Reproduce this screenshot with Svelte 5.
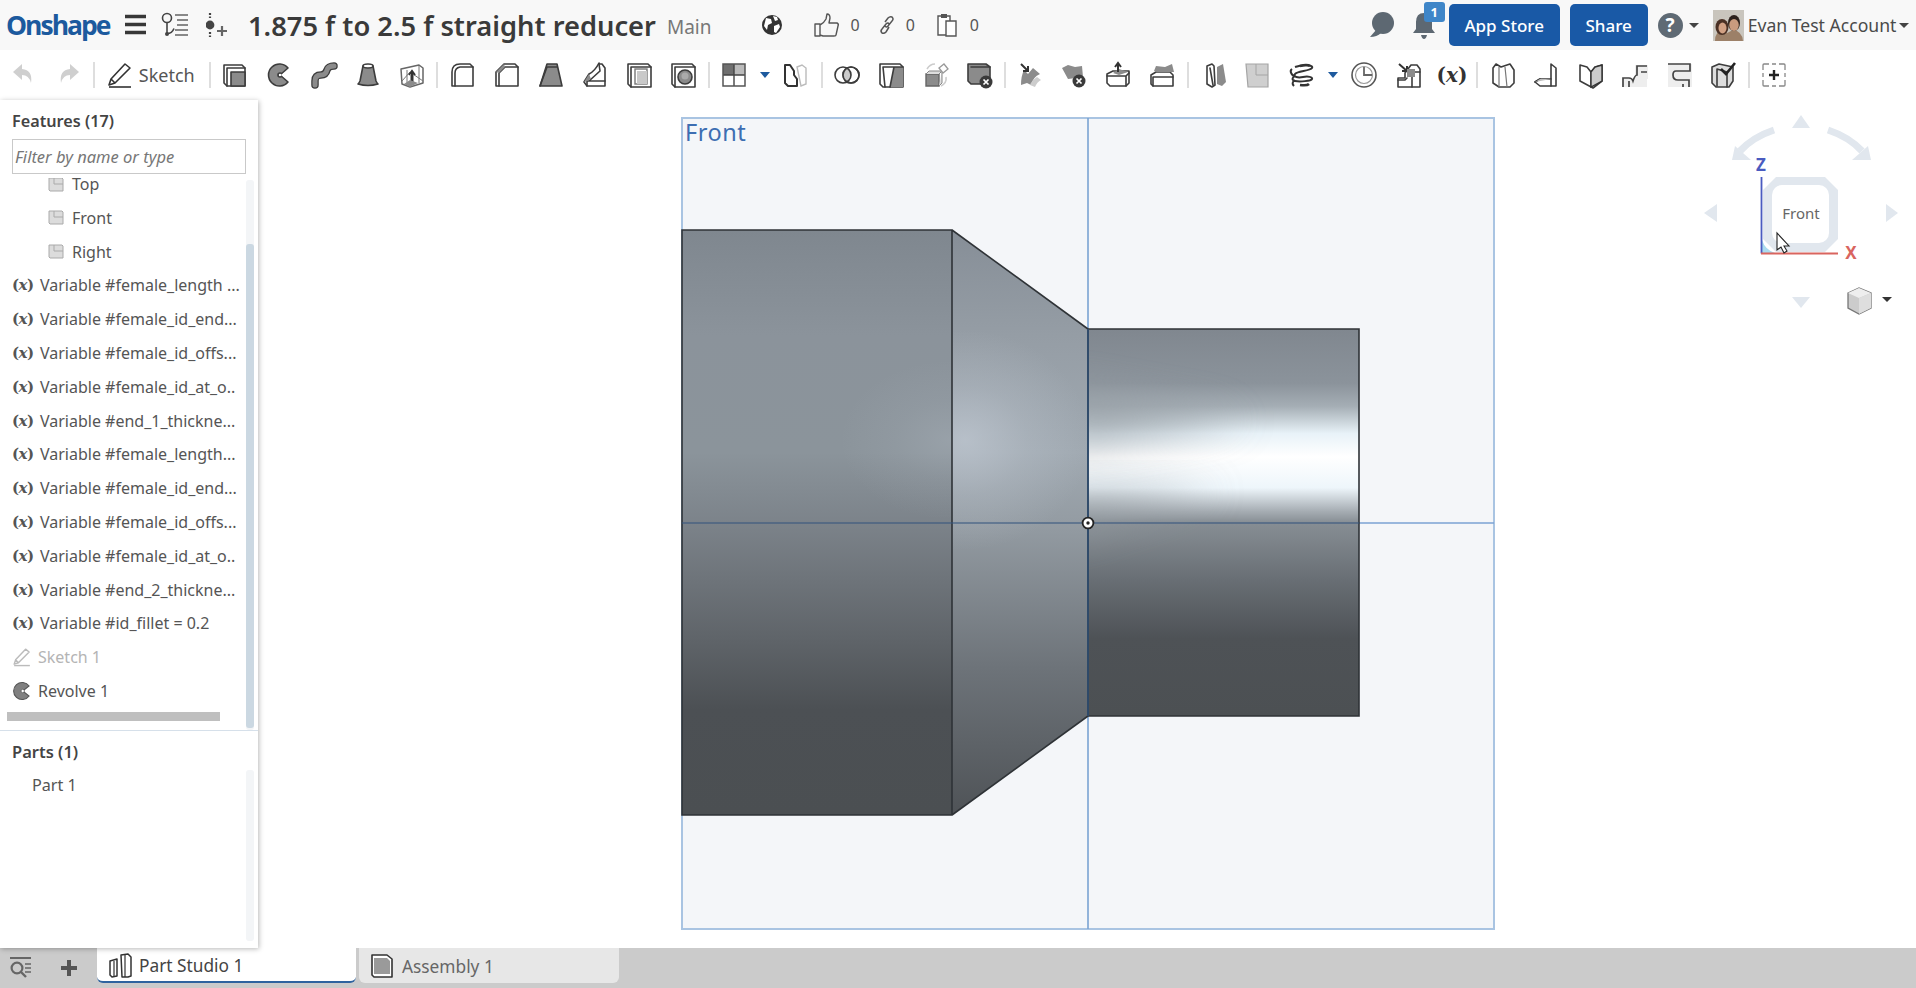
<script>
  // stroke helpers for the toolbar glyphs
  const d = 'stroke="#3c3c3c" stroke-width="1.6" stroke-linejoin="round" stroke-linecap="round"'
  const g = '#8b8b8b'
  const closeBadge = (x, y) => `<circle cx="${x}" cy="${y}" r="6.5" fill="#3a3a3a"/><path d="M${x - 2.5} ${y - 2.5}l5 5m0-5l-5 5" stroke="#fff" stroke-width="1.7"/>`

  const icons = {
    extrude: `<path d="M3 4h18l3 3v18H6l-3-3z" fill="#fff" ${d}/><path d="M6 7h15v0l3 0M6 7v18" fill="none" ${d}/><rect x="10" y="11" width="14" height="14" fill="${g}" ${d}/>`,
    revolve: `<path d="M23 7A11 11 0 1 0 23 21L15 14z" fill="${g}" ${d}/><circle cx="15" cy="14" r="2" fill="#fff" ${d}/><path d="M22 11l-5 3 5 3" fill="none" stroke="#fff" stroke-width="1.4"/>`,
    sweep: `<path d="M5 24v-4c0-5 3-6 6-6s5-1 6-5c.5-2 3-4 7-4" fill="none" stroke="#3c3c3c" stroke-width="7.5" stroke-linecap="round"/><path d="M5 24v-4c0-5 3-6 6-6s5-1 6-5c.5-2 3-4 7-4" fill="none" stroke="${g}" stroke-width="5" stroke-linecap="round"/>`,
    loft: `<path d="M9 5L6 20q-1 2-2 3 10 3 20 0-1-1-2-3L19 5z" fill="${g}" ${d}/><ellipse cx="14" cy="5" rx="5" ry="2" fill="#fff" ${d}/>`,
    thicken: `<path d="M3 8l18-4 4 3v15l-13 4-8-3z" fill="#fff" stroke="#666" stroke-width="1.5" stroke-linejoin="round"/><path d="M9 9v15M21 5v17M4 20l8-9 13 9" fill="none" stroke="#777" stroke-width="1"/><path d="M14 20V11m-3 3l3-4 3 4" fill="none" stroke="#333" stroke-width="2"/><rect x="12.5" y="14" width="3" height="8" fill="#333"/><path d="M6 23l6-4 8 3-8 4z" fill="${g}"/>`,
    fillet: `<path d="M3 25V11q0-8 8-8h10l3 3v19z" fill="#fff" ${d}/><path d="M6 25V12q0-5 5-6h13" fill="none" ${d}/>`,
    chamfer: `<path d="M3 25V11l8-8h11l3 3v19z" fill="#fff" ${d}/><path d="M6 25V12l6-6h13" fill="none" ${d}/><path d="M3 11l8-8 1 3-6 6z" fill="${g}"/>`,
    draft: `<path d="M10 3h10l5 22H3z" fill="${g}" ${d}/><path d="M3 25l7-19h10" fill="none" ${d}/>`,
    rib: `<path d="M18 3h3l3 4v18H6l-3-4 5-8q6-3 10-11z" fill="#fff" ${d}/><path d="M6 25v-5h18M18 3l1 7-11 10" fill="none" ${d}/><path d="M3 21l5-8 2 5-4 2z" fill="${g}"/>`,
    shell: `<path d="M3 3h20l3 3v20H6l-3-3z" fill="#fff" ${d}/><path d="M6 6h20M6 6v20" fill="none" ${d}/><rect x="10" y="8" width="12" height="15" fill="#fff" stroke="#777" stroke-width="1.4"/><rect x="12" y="10" width="10" height="13" fill="#c9c9c9"/>`,
    hole: `<path d="M3 3h20l3 3v20H6l-3-3z" fill="#fff" ${d}/><path d="M6 6h20M6 6v20" fill="none" ${d}/><circle cx="16" cy="16" r="7" fill="${g}" ${d}/><circle cx="16" cy="15" r="3.5" fill="#aaa"/>`,
    pattern: `<path d="M3 3h22v22H3z" fill="#fff"/><rect x="3" y="3" width="11" height="11" fill="#6f6f6f"/><path d="M14 14h11V3H14z" fill="#bbb"/><path d="M3 14h22M14 3v22" stroke="#444" stroke-width="1.4"/><path d="M3 3h22v22H3z" fill="none" stroke="#555" stroke-width="1.5"/>`,
    mirror: `<path d="M15 6l5-2 4 3v16l-5 2z" fill="#fff" stroke="#bbb" stroke-width="1.4"/><path d="M3 4h5l4 6v4l3 4v7H6l-3-3z" fill="#fff" stroke="#333" stroke-width="2" stroke-linejoin="round"/>`,
    boolean: `<circle cx="18" cy="14" r="8" fill="#fff" ${d}/><path d="M14 7a8 8 0 0 1 0 14 8 8 0 0 1 0-14z" fill="#ccc"/><circle cx="10" cy="14" r="8" fill="none" ${d}/><circle cx="18" cy="14" r="8" fill="none" ${d}/>`,
    split: `<path d="M3 3h20l3 3v20H6l-3-3z" fill="#fff" ${d}/><path d="M17 6h9v20H13z" fill="${g}"/><path d="M6 6h20M6 6l2 20M17 6l-4 20" fill="none" ${d}/>`,
    transform: `<path d="M5 13h13v12H5z" fill="${g}" stroke="#666" stroke-width="1.4"/><path d="M5 13l3-3h13l-3 3M21 10v12l-3 3" fill="#ddd" stroke="#888" stroke-width="1"/><path d="M18 7l5-4 4 5-5 4z" fill="#fff" stroke="#999" stroke-width="1.3"/><path d="M6 8q3-5 8-5M25 16q1 6-5 9" fill="none" stroke="#ccc" stroke-width="1.6"/>`,
    delpart: `<path d="M3 3h18l4 3v17H6l-3-3z" fill="${g}" ${d}/><path d="M6 6h19" ${d}/>${closeBadge(21, 21)}`,
    moveface: `<path d="M5 24q0-9 3-15l4 4 5-6 7 6q-7 3-9 11l-4-2z" fill="${g}"/><path d="M14 24q2-5 7-8l4 3q-4 2-6 7z" fill="#ccc"/><path d="M5 3l7 7m0-5v5H7" fill="none" stroke="#333" stroke-width="2"/>`,
    delface: `<path d="M2 7l6-3 7 2 7-1 1 11-7 1-8 1z" fill="${g}"/>${closeBadge(19, 20)}`,
    modfillet: `<path d="M3 13l6-3h16v12l-3 3H6l-3-3z" fill="#fff" ${d}/><path d="M3 15h19v10M22 15l3-3" fill="none" ${d}/><path d="M9 12l6-4 9 3-9 3z" fill="${g}"/><path d="M14 11V3m-3 3l3-4 3 4" fill="none" stroke="#333" stroke-width="2"/>`,
    replace: `<path d="M3 14l5-3h14l3 3v11H5l-2-2z" fill="#fff" ${d}/><path d="M5 16h20M5 16v9" fill="none" ${d}/><path d="M6 10l2-5 9 1 7-3 2 8H9z" fill="${g}"/>`,
    plane: `<path d="M8 5l5-2 2 2 1 19-3 2-5-3z" fill="#fff" ${d}/><path d="M11 7l3 17" ${d}/><path d="M18 6l6-3 3 18-4 4-5-2z" fill="${g}"/>`,
    plane2: `<path d="M3 3h22v23H5z" fill="#cfcfcf" stroke="#a5a5a5" stroke-width="1.2"/><path d="M13 3v11h12" fill="none" stroke="#a5a5a5" stroke-width="1"/>`,
    helix: `<path d="M8 6c8-3 19-2 17 1s-15 3-17 6 3 4 8 3 10 0 9 2-12 3-17 2-1-5 0-5c-3 0 -6-5-3-7 M8 19c-3 2-3 4-1 6" fill="none" stroke="#333" stroke-width="2"/><path d="M13 5q7-2 10 0M13 24q7 1 9-1" stroke="#333" stroke-width="2.6" fill="none"/>`,
    clock: `<circle cx="14" cy="14" r="12" fill="#fff" stroke="#555" stroke-width="1.6"/><circle cx="14" cy="14" r="8.5" fill="none" stroke="#999" stroke-width="1.2"/><path d="M14 6v8h8" fill="none" stroke="#666" stroke-width="1.8"/>`,
    derive: `<path d="M4 17h7v-5l6-8h6l3 4v18H4z" fill="#fff" ${d}/><path d="M4 19h7l2-2M26 11h-8v15" fill="none" ${d}/><path d="M5 3l8 7m0-5v5H8" fill="none" stroke="#333" stroke-width="2"/><path d="M13 8h8v8h-8z" fill="${g}"/>`,
    sheet: `<path d="M7 3l5 3 9-3 4 6v13l-4 4H10l-6-4V7z" fill="#fff" ${d}/><path d="M10 6v20M16 6l2 20" fill="none" stroke="#777" stroke-width="1.2"/>`,
    flange: `<path d="M18 3l5 4v18H7l-5-4 5-3h11z" fill="#fff" ${d}/><path d="M18 18v7M7 18l-5 3" fill="none" ${d}/><path d="M7 18h11L2 21z" fill="#bbb"/>`,
    hem: `<path d="M3 4l7 2 4 5 4-5 7-2v16l-9 7-13-7z" fill="#fff" ${d}/><path d="M14 11v14" ${d}/><path d="M14 11l4-5 7-2v16l-11 6z" fill="#ccc" stroke="#333" stroke-width="1.4"/>`,
    jog: `<rect x="2" y="18" width="24" height="8" fill="#eee"/><rect x="14" y="4" width="13" height="14" fill="#eee"/><path d="M2 26V17h6q3 0 4 3 2-6 4-6V5h10M8 26v-6M26 11H20" fill="none" stroke="#444" stroke-width="1.7"/>`,
    bend: `<rect x="3" y="3" width="24" height="23" fill="#eee"/><path d="M3 3h22v7H11q-3 0-3 4 0 5 5 5h11v7M18 26v-3" fill="none" stroke="#444" stroke-width="1.7"/>`,
    finish: `<path d="M3 6l7-3 14 3v14l-4 6H7l-4-4z" fill="#ddd" ${d}/><path d="M8 25V8l10 3v15" fill="none" ${d}/><path d="M12 8l5 5 9-11" fill="none" stroke="#222" stroke-width="2.6"/>`,
    add: `<path d="M3 9V4q0-1 1-1h5M19 3h5q1 0 1 1v5M25 19v5q0 1-1 1h-5M9 25H4q-1 0-1-1v-5M3 12v4M25 12v4M12 3h4M12 25h4" fill="none" stroke="#888" stroke-width="1.3"/><path d="M14 9v10M9 14h10" stroke="#222" stroke-width="2.4"/>`,
    undo: `<path d="M12 3L3 11l9 8v-5q7 0 9 8 2-13-9-14z" fill="#cfcfcf"/>`,
    redo: `<path d="M16 3l9 8-9 8v-5q-7 0-9 8-2-13 9-14z" fill="#cfcfcf"/>`,
    pen: `<path d="M3 24l2-6L19 3l5 4L9 22zM5 18l4 4" fill="none" stroke="#333" stroke-width="1.6" stroke-linejoin="round"/><path d="M3 26h22" stroke="#333" stroke-width="1.6"/>`
  }

  // toolbar order, left to right
  const groups = [
    ['extrude', 'revolve', 'sweep', 'loft', 'thicken'],
    ['fillet', 'chamfer', 'draft', 'rib', 'shell', 'hole'],
    ['pattern', '|caret', 'mirror'],
    ['boolean', 'split', 'transform', 'delpart'],
    ['moveface', 'delface', 'modfillet', 'replace'],
    ['plane', 'plane2', 'helix', '|caret', 'clock', 'derive', 'var'],
    ['sheet', 'flange', 'hem', 'jog', 'bend', 'finish'],
    ['add']
  ]

  const variables = [
    'Variable #female_length ...',
    'Variable #female_id_end...',
    'Variable #female_id_offs...',
    'Variable #female_id_at_o..',
    'Variable #end_1_thickne...',
    'Variable #female_length...',
    'Variable #female_id_end...',
    'Variable #female_id_offs...',
    'Variable #female_id_at_o..',
    'Variable #end_2_thickne...',
    'Variable #id_fillet = 0.2'
  ]
</script>

<div class="app">
  <header class="topbar">
    <span class="logo">Onshape</span>
    <svg class="h-menu" width="22" height="22" viewBox="0 0 22 22"><path d="M0 2.5h21M0 10.500h21M0 18.500h21" stroke="#383838" stroke-width="3.4"/></svg>
    <svg class="h-list" width="28" height="26" viewBox="0 0 28 26"><circle cx="6" cy="6" r="4.500" fill="none" stroke="#444" stroke-width="1.6"/><path d="M6 10.500v11q5 0 7-5" fill="none" stroke="#444" stroke-width="1.6"/><circle cx="6" cy="22" r="2" fill="#444"/><path d="M14 3h13M16 8h11M16 13h11M14 18h13M14 23h13" stroke="#888" stroke-width="2"/></svg>
    <svg class="h-feat" width="22" height="26" viewBox="0 0 22 26"><path d="M4 1v5M4 20v5" stroke="#444" stroke-width="2.200" stroke-dasharray="2 1.500"/><circle cx="4" cy="13" r="4.400" fill="#444"/><path d="M16 14v10M11 19h10" stroke="#666" stroke-width="2.200"/></svg>
    <h1 class="title">1.875 f to 2.5 f straight reducer</h1>
    <span class="branch">Main</span>

    <svg class="h-globe" width="22" height="22" viewBox="0 0 22 22"><circle cx="11" cy="11" r="10" fill="#333"/><path d="M5 4l5 1 1 4-4 2-1 5-3-4zM13 12l5-2 1 3-4 6-2-1zM12 2l4 1 1 3-3 1z" fill="#fff"/></svg>
    <svg class="h-like" width="26" height="24" viewBox="0 0 26 24"><path d="M1 11h5v12H1zM6 12q4-2 6-6l1-5q3 0 3 4l-1 5h8q2 1 1 3l-2 9q0 1-2 1H9l-3-1" fill="none" stroke="#555" stroke-width="1.4" stroke-linejoin="round"/></svg>
    <span class="count">0</span>
    <svg class="h-link" width="18" height="20" viewBox="0 0 18 20"><path d="M7 7l3-4q2-2 4-1 2 2 0 4l-4 5q-2 2-3 0M11 12l-3 5q-2 2-4 1-2-2 0-4l4-5q2-2 3 0" fill="none" stroke="#555" stroke-width="1.5"/></svg>
    <span class="count">0</span>
    <svg class="h-clip" width="20" height="24" viewBox="0 0 20 24"><path d="M1 3h12v19H1z" fill="#fff" stroke="#555" stroke-width="1.4"/><path d="M9 8h10v15H9z" fill="#fff" stroke="#555" stroke-width="1.4"/><path d="M4 1h6v4H4z" fill="#555"/></svg>
    <span class="count last">0</span>

    <div class="topright">
      <svg class="h-chat" width="28" height="28" viewBox="0 0 28 28"><circle cx="15" cy="12" r="11" fill="#5d6872"/><path d="M8 19l-6 7q7 0 11-4z" fill="#5d6872"/></svg>
      <div class="bell">
        <svg width="26" height="30" viewBox="0 0 26 30"><path d="M13 3q8 0 8 9v7l3 4H2l3-4v-7q0-9 8-9z" fill="#5d6872"/><path d="M10 25h6q-1 4-3 4t-3-4z" fill="#5d6872"/></svg>
        <span class="badge">1</span>
      </div>
      <button class="btn store">App Store</button>
      <button class="btn share">Share</button>
      <span class="help">?</span>
      <span class="caret dark"></span>
      <svg class="avatar" width="31" height="31" viewBox="0 0 31 31">
        <rect width="31" height="31" fill="#c9c5bd"/>
        <path d="M2 31q0-10 8-10l4 2 6-3q9 1 10 11z" fill="#9c8068"/>
        <ellipse cx="9" cy="17" rx="6.500" ry="8" fill="#4a3024"/>
        <ellipse cx="9.500" cy="18" rx="4" ry="5.400" fill="#d2a184"/>
        <ellipse cx="21" cy="13" rx="6" ry="8" fill="#2c211c"/>
        <ellipse cx="21" cy="15" rx="4.800" ry="6" fill="#c99b7e"/>
      </svg>
      <span class="user">Evan Test Account</span>
      <span class="caret dark"></span>
    </div>
  </header>

  <nav class="toolbar">
    <span class="tool"><svg width="28" height="28" viewBox="0 0 28 28">{@html icons.undo}</svg></span>
    <span class="tool"><svg width="28" height="28" viewBox="0 0 28 28">{@html icons.redo}</svg></span>
    <span class="sep"></span>
    <span class="sketch"><svg width="28" height="28" viewBox="0 0 28 28">{@html icons.pen}</svg>Sketch</span>
    {#each groups as group}
      <span class="sep"></span>
      {#each group as name}
        {#if name === '|caret'}
          <span class="tool-caret"></span>
        {:else if name === 'var'}
          <span class="tool var-glyph">(<i>x</i>)</span>
        {:else}
          <span class="tool"><svg width="28" height="28" viewBox="0 0 28 28">{@html icons[name]}</svg></span>
        {/if}
      {/each}
    {/each}
  </nav>

  <div class="workspace">
    <aside class="panel">
      <div class="panel-head">Features (17)</div>
      <input class="filter" placeholder="Filter by name or type" />
      <div class="tree">
        <div class="tree-rows">
          {#each ['Top', 'Front', 'Right'] as plane}
            <div class="row plane">
              <svg width="16" height="15" viewBox="0 0 16 15"><path d="M1 1h13l1 1v12H2l-1-1z" fill="#dcdcdc" stroke="#aaa"/><path d="M6 1v6h9" fill="none" stroke="#aaa"/></svg>
              {plane}
            </div>
          {/each}
          {#each variables as label}
            <div class="row"><span class="var-icon">(<i>x</i>)</span>{label}</div>
          {/each}
          <div class="row muted">
            <svg width="20" height="20" viewBox="0 0 28 28"><path d="M3 24l2-6L19 3l5 4L9 22zM5 18l4 4" fill="none" stroke="#bbb" stroke-width="2" stroke-linejoin="round"/><path d="M3 26h22" stroke="#bbb" stroke-width="2"/></svg>
            Sketch 1
          </div>
          <div class="row">
            <svg width="20" height="20" viewBox="0 0 28 28"><path d="M24 7A12 12 0 1 0 24 21L15 14z" fill="#808080" stroke="#555" stroke-width="1.5"/><circle cx="15" cy="14" r="2.400" fill="#fff" stroke="#555"/></svg>
            Revolve 1
          </div>
        </div>
        <div class="hscroll"></div>
        <div class="vtrack"><div class="vthumb"></div></div>
      </div>
      <div class="panel-head parts-head">Parts (1)</div>
      <div class="parts">
        <div class="part">Part 1</div>
        <div class="vtrack parts-track"></div>
      </div>
    </aside>

    <main class="viewport">
      <svg width="1658" height="848" viewBox="258 100 1658 848">
        <defs>
          <linearGradient id="bigShade" x1="0" y1="0" x2="0" y2="1">
            <stop offset="0" stop-color="#7f878f"/>
            <stop offset=".18" stop-color="#8b939b"/>
            <stop offset=".38" stop-color="#8b949b"/>
            <stop offset=".5" stop-color="#7c838a"/>
            <stop offset=".7" stop-color="#5f6469"/>
            <stop offset=".82" stop-color="#4c5054"/>
            <stop offset="1" stop-color="#4b4f52"/>
          </linearGradient>
          <linearGradient id="coneShade" x1="0" y1="0" x2="0" y2="1">
            <stop offset="0" stop-color="#868e97"/>
            <stop offset=".18" stop-color="#959da5"/>
            <stop offset=".38" stop-color="#a0a9b1"/>
            <stop offset=".5" stop-color="#949ca3"/>
            <stop offset=".75" stop-color="#6d7379"/>
            <stop offset="1" stop-color="#4f5357"/>
          </linearGradient>
          <radialGradient id="glow" cx=".5" cy=".5" r=".5">
            <stop offset="0" stop-color="#c2cad4" stop-opacity=".8"/>
            <stop offset=".5" stop-color="#c2cad4" stop-opacity=".3"/>
            <stop offset="1" stop-color="#c2cad4" stop-opacity="0"/>
          </radialGradient>
          <linearGradient id="smallShade" x1="0" y1="0" x2="0" y2="1">
            <stop offset="0" stop-color="#80878f"/>
            <stop offset=".14" stop-color="#8b939b"/>
            <stop offset=".2" stop-color="#a5aeb5"/>
            <stop offset=".27" stop-color="#e8f2f8"/>
            <stop offset=".33" stop-color="#ffffff"/>
            <stop offset=".41" stop-color="#eef6fb"/>
            <stop offset=".47" stop-color="#a7aeb4"/>
            <stop offset=".5" stop-color="#878e94"/>
            <stop offset=".65" stop-color="#686e74"/>
            <stop offset=".8" stop-color="#4e5256"/>
            <stop offset="1" stop-color="#4c5053"/>
          </linearGradient>
          <clipPath id="coneClip"><polygon points="952,230 1088,329 1088,716 952,815"/></clipPath>
          <clipPath id="bigClip"><rect x="682" y="230" width="270" height="585"/></clipPath>
          <clipPath id="smallClip"><rect x="1088" y="329" width="271" height="387"/></clipPath>
          <filter id="soften" x="-60%" y="-60%" width="220%" height="220%"><feGaussianBlur stdDeviation="20"/></filter>
        </defs>

        <rect x="682" y="118" width="812" height="811" fill="#f4f6f9" stroke="#a9c4e2" stroke-width="2"/>
        <text x="685" y="141" class="plane-name">Front</text>
        <path d="M1088 118V929M1359 523H1494" stroke="#7ba3d3" stroke-width="1.6"/>

        <rect x="682" y="230" width="270" height="585" fill="url(#bigShade)"/>
        <ellipse cx="950" cy="440" rx="110" ry="80" fill="url(#glow)" opacity=".3" clip-path="url(#bigClip)"/>
        <polygon points="952,230 1088,329 1088,716 952,815" fill="url(#coneShade)"/>
        <ellipse cx="965" cy="440" rx="125" ry="110" fill="url(#glow)" opacity=".85" clip-path="url(#coneClip)"/>
        <rect x="1088" y="329" width="271" height="387" fill="url(#smallShade)"/>
        <!-- the bright band narrows toward the step -->
        <g clip-path="url(#smallClip)">
          <polygon points="1060,385 1250,420 1060,450" fill="#949ca3" opacity=".75" filter="url(#soften)"/>
          <polygon points="1060,490 1220,490 1060,540" fill="#969da3" opacity=".6" filter="url(#soften)"/>
        </g>

        <path d="M682 230H952V815H682ZM952 230L1088 329V716L952 815M1088 329H1359V716H1088" fill="none" stroke="#2f3337" stroke-width="1.6"/>
        <path d="M682 523H1359" stroke="#34557e" stroke-width="1.4" opacity=".7"/>
        <path d="M1088 329V716" stroke="#2e4e74" stroke-width="1.6"/>
        <circle cx="1088" cy="523" r="5.400" fill="#fff" stroke="#222" stroke-width="1.8"/>
        <circle cx="1088" cy="523" r="1.700" fill="#222"/>

        <!-- view cube -->
        <g fill="#e1e7ee">
          <polygon points="1801,115 1792,128 1810,128"/>
          <polygon points="1801,308 1792,297 1810,297"/>
          <polygon points="1704,213 1717,204 1717,222"/>
          <polygon points="1898,213 1886,204 1886,222"/>
          <polygon points="1732,160 1751,160 1735,146"/>
          <polygon points="1871,160 1852,160 1868,146"/>
        </g>
        <path d="M1774 130Q1753 137 1740 151M1828 130Q1849 137 1862 151" fill="none" stroke="#e1e7ee" stroke-width="7"/>
        <path d="M1776 177H1825L1838 190V239L1825 252H1776L1763 239V190Z" fill="#e1e7ee"/>
        <rect x="1772" y="185" width="57" height="58" rx="10" fill="#fff"/>
        <text x="1801" y="219" class="cube-name">Front</text>
        <path d="M1762 253V240A20 20 0 0 0 1775 253Z" fill="#abdbef"/>
        <path d="M1761.500 177V253.500" stroke="#4a5bc0" stroke-width="1.8"/>
        <path d="M1761 253.500H1838" stroke="#d9655f" stroke-width="2"/>
        <text x="1761" y="171" class="axis z">Z</text>
        <text x="1851" y="259" class="axis x">X</text>
        <path d="M1777 233V250L1781 247L1784 253L1787 251L1784 246H1789Z" fill="#fff" stroke="#222" stroke-width="1.100"/>
        <path d="M1848 293L1859 288L1871 293V308L1859 314L1848 308Z" fill="#ccc" stroke="#777" stroke-width="1.300"/>
        <path d="M1848 293L1859 298L1871 293L1859 288Z" fill="#eee"/>
        <path d="M1859 298V314L1871 308V293Z" fill="#dedede"/>
        <polygon points="1882,297 1892,297 1887,302" fill="#333"/>
      </svg>
    </main>
  </div>

  <footer class="tabs">
    <svg class="t-search" width="24" height="24" viewBox="0 0 24 24"><path d="M1 2h21" stroke="#666" stroke-width="2"/><circle cx="8" cy="12" r="5.400" fill="none" stroke="#666" stroke-width="2.200"/><path d="M12 16l5 5" stroke="#666" stroke-width="2.400"/><path d="M16 8h6M16 12h6M16 16h6" stroke="#666" stroke-width="1.6"/></svg>
    <svg class="t-plus" width="20" height="20" viewBox="0 0 20 20"><path d="M10 2v16M2 10h16" stroke="#555" stroke-width="4"/></svg>
    <div class="tab active">
      <svg width="26" height="26" viewBox="0 0 26 26"><path d="M2 9l7-2v17l-5 1-2-2zM13 3l7-1 3 3v19l-3 1h-6z" fill="#fff" stroke="#333" stroke-width="1.5" stroke-linejoin="round"/><path d="M6 9v16M17 3v22" fill="none" stroke="#333" stroke-width="1.200"/></svg>
      Part Studio 1
    </div>
    <div class="tab second">
      <svg width="24" height="26" viewBox="0 0 24 26"><path d="M2 2h15l5 4v18H4l-2-2z" fill="#fff" stroke="#333" stroke-width="1.6" stroke-linejoin="round"/><path d="M4 5h13l3 3v13H4z" fill="#9a9a9a"/></svg>
      Assembly 1
    </div>
  </footer>
</div>

<style>
  :global(body) {
    margin: 0;
    background: #fff;
  }

  .app {
    width: 1916px;
    height: 988px;
    display: flex;
    flex-direction: column;
    overflow: hidden;
    font-family: "Noto Sans", "Open Sans", sans-serif;
    color: #444;
  }

  /* top bar */
  .topbar {
    height: 50px;
    flex: none;
    display: flex;
    align-items: center;
    background: #f8f8f8;
  }
  .logo {
    margin-left: 6px;
    width: 104px;
    font-family: "Open Sans", sans-serif;
    font-weight: 700;
    font-size: 26.5px;
    letter-spacing: -2px;
    color: #1c5a9e;
  }
  .h-menu { margin-left: 15px; }
  .h-list { margin-left: 14px; }
  .h-feat { margin-left: 17px; }
  .title {
    margin: 0 0 0 20px;
    font-size: 27.3px;
    font-weight: 600;
    color: #3a3a3a;
    white-space: nowrap;
  }
  .branch {
    margin: 4px 0 0 11px;
    font-size: 19px;
    color: #777;
  }
  .h-globe { margin-left: 50px; }
  .h-like { margin-left: 31px; }
  .h-link { margin-left: 18px; }
  .h-clip { margin-left: 22px; }
  .count {
    margin-left: 10px;
    font-size: 16px;
    color: #555;
  }
  .last { margin-left: 13px; }
  .topright {
    margin-left: auto;
    display: flex;
    align-items: center;
    padding-right: 7px;
  }
  .bell {
    position: relative;
    margin-left: 15px;
    height: 30px;
  }
  .badge {
    position: absolute;
    left: 13px;
    top: -8px;
    width: 21px;
    height: 20px;
    border-radius: 3px;
    background: #3f86c8;
    color: #fff;
    font-size: 13px;
    font-weight: 700;
    text-align: center;
    line-height: 20px;
  }
  .btn {
    height: 42px;
    border: 0;
    border-radius: 5px;
    background: #1959a6;
    color: #fff;
    font-family: inherit;
    font-size: 17px;
    font-weight: 500;
    padding: 0;
  }
  .store { width: 111px; margin-left: 12px; }
  .share { width: 78px; margin-left: 10px; }
  .help {
    margin-left: 10px;
    width: 25px;
    height: 25px;
    border-radius: 50%;
    background: #5f6a74;
    color: #fff;
    font-weight: 700;
    font-size: 19px;
    line-height: 25px;
    text-align: center;
  }
  .caret {
    width: 0;
    height: 0;
    border: 5px solid transparent;
    border-top: 5px solid #444;
    border-bottom: 0;
  }
  .help + .caret { margin-left: 6px; }
  .avatar { margin-left: 14px; }
  .user {
    margin: 0 2.6px 0 4px;
    font-size: 17.6px;
    color: #4a4a4a;
    white-space: nowrap;
  }

  /* feature toolbar */
  .toolbar {
    height: 50px;
    flex: none;
    display: flex;
    align-items: center;
    padding-left: 2px;
    background: #fff;
  }
  .tool {
    width: 44.2px;
    flex: none;
    display: flex;
    justify-content: center;
    align-items: center;
  }
  .tool-caret {
    width: 18px;
    flex: none;
    display: flex;
    justify-content: center;
  }
  .tool-caret::before {
    content: "";
    border-top: 6px solid #1e5a9e;
    border-left: 5px solid transparent;
    border-right: 5px solid transparent;
  }
  .sep {
    width: 2px;
    height: 26px;
    flex: none;
    margin: 0 2.2px;
    background: #dedede;
  }
  .sketch {
    width: 110px;
    flex: none;
    box-sizing: border-box;
    padding-left: 9px;
    display: flex;
    align-items: center;
    gap: 5px;
    font-size: 18px;
    color: #555;
  }
  .var-glyph {
    font-family: "DejaVu Serif", "Liberation Serif", serif;
    font-size: 20px;
    font-weight: 700;
    color: #333;
  }
  .var-glyph i { font-style: italic; }

  /* main area */
  .workspace {
    flex: 1;
    min-height: 0;
    display: flex;
  }
  .panel {
    width: 258px;
    height: 848px;
    flex: none;
    box-sizing: border-box;
    display: flex;
    flex-direction: column;
    background: #fff;
    box-shadow: 1px 1px 5px rgba(0, 0, 0, .28);
    position: relative;
  }
  .panel-head {
    padding: 10px 0 0 12px;
    height: 29px;
    flex: none;
    box-sizing: content-box;
    font-size: 16.2px;
    font-weight: 600;
    color: #444;
  }
  .filter {
    margin: 0 0 0 12px;
    width: 234px;
    height: 35px;
    flex: none;
    box-sizing: border-box;
    border: 1px solid #c9c9c9;
    background: #fff;
    padding: 0 2px;
    font-family: inherit;
    font-size: 16.5px;
    font-style: italic;
  }
  .filter::placeholder { color: #777; }
  .tree {
    height: 552px;
    margin-top: 4px;
    flex: none;
    position: relative;
    overflow: hidden;
    border-bottom: 1px solid #d6e0ea;
  }
  .tree-rows { margin-top: -10.8px; }
  .row {
    height: 33.8px;
    display: flex;
    align-items: center;
    padding-left: 12px;
    gap: 6px;
    font-size: 16px;
    color: #555;
    white-space: nowrap;
  }
  .plane { padding-left: 48px; gap: 8px; }
  .muted { color: #b4b4b4; }
  .var-icon {
    width: 22px;
    font-family: "DejaVu Serif", "Liberation Serif", serif;
    font-size: 15px;
    font-weight: 700;
    color: #555;
    letter-spacing: -.5px;
  }
  .hscroll {
    position: absolute;
    left: 7px;
    top: 534px;
    width: 213px;
    height: 9px;
    background: #bfbfbf;
  }
  .vtrack {
    position: absolute;
    left: 246px;
    top: 2px;
    bottom: 0;
    width: 8px;
    border-radius: 3px;
    background: #f3f5f7;
  }
  .vthumb {
    position: absolute;
    left: 0;
    right: 0;
    top: 64px;
    bottom: 2px;
    border-radius: 3px;
    background: #cbd8e2;
  }
  .parts-head { padding-top: 9px; height: 30px; font-size: 16.5px; }
  .parts {
    flex: 1;
    position: relative;
  }
  .parts-track { top: 0; bottom: 7px; }
  .part {
    padding-left: 32px;
    margin-top: -2px;
    height: 34px;
    line-height: 34px;
    font-size: 16.2px;
    color: #555;
  }
  .viewport {
    flex: 1;
    min-width: 0;
    height: 848px;
    background: #fff;
  }
  .viewport svg { display: block; }
  .plane-name {
    font-size: 23.5px;
    letter-spacing: .5px;
    fill: #3d6eb2;
  }
  .cube-name {
    font-size: 15px;
    fill: #666;
    text-anchor: middle;
  }
  .axis {
    font-size: 17px;
    font-weight: 700;
    text-anchor: middle;
  }
  .axis.z { fill: #4a5bc0; }
  .axis.x { fill: #d9655f; }

  /* document tabs */
  .tabs {
    height: 40px;
    flex: none;
    display: flex;
    align-items: flex-start;
    background: #cbcbcb;
  }
  .t-search { margin: 8px 0 0 9px; flex: none; }
  .t-plus { margin: 10px 0 0 26px; flex: none; }
  .tab {
    height: 35px;
    flex: none;
    width: 260px;
    margin-left: 3px;
    box-sizing: border-box;
    display: flex;
    align-items: center;
    gap: 5px;
    padding-left: 11px;
    padding-top: 1px;
    border-radius: 0 0 6px 6px;
    background: #e7e7e7;
    font-size: 17.3px;
    color: #666;
  }
  .second { gap: 8px; }
  .active {
    width: 259px;
    margin-left: 18px;
    background: #fff;
    color: #444;
    border-bottom: 2px solid #2f639f;
  }
</style>
